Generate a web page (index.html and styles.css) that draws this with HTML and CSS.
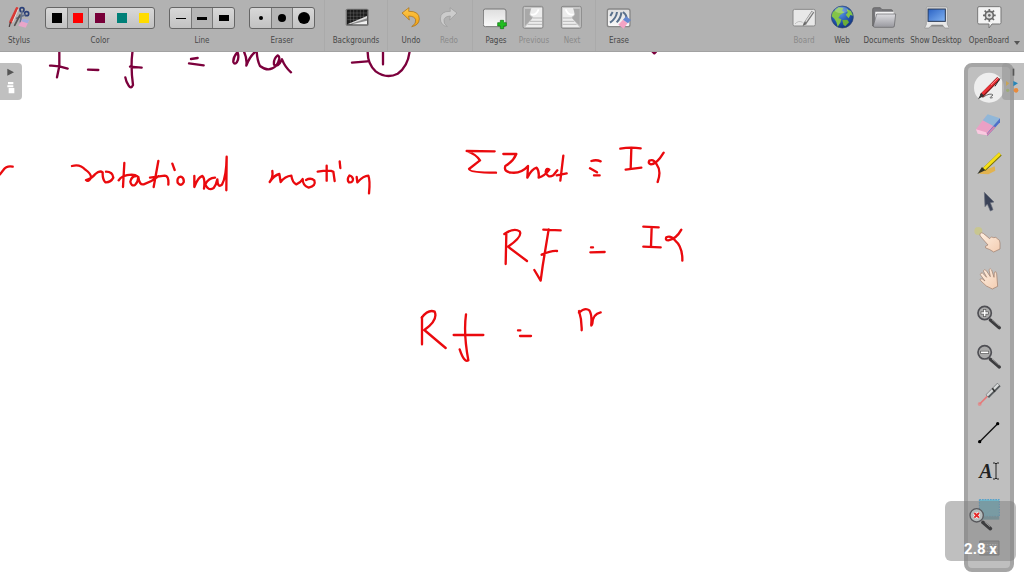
FILE: index.html
```html
<!DOCTYPE html>
<html lang="en">
<head>
<meta charset="utf-8">
<title>OpenBoard</title>
<link rel="stylesheet" href="styles.css">
</head>
<body>
<svg class="defs" aria-hidden="true">
  <defs>
    <linearGradient id="paper" x1="0" y1="0" x2="0" y2="1"><stop offset="0" stop-color="#dedede"/><stop offset="1" stop-color="#fafafa"/></linearGradient>
    <linearGradient id="screen" x1="0" y1="0" x2="1" y2="1"><stop offset="0" stop-color="#2a62c4"/><stop offset="1" stop-color="#83b4f2"/></linearGradient>
    <linearGradient id="folder" x1="0" y1="0" x2="0" y2="1"><stop offset="0" stop-color="#dcdce0"/><stop offset="1" stop-color="#98989e"/></linearGradient>
    <linearGradient id="gold" x1="0" y1="0" x2="0" y2="1"><stop offset="0" stop-color="#ffc84a"/><stop offset="1" stop-color="#f0a010"/></linearGradient>
    <radialGradient id="globe" cx=".4" cy=".3" r=".8"><stop offset="0" stop-color="#5c9ae8"/><stop offset=".6" stop-color="#1f4fa8"/><stop offset="1" stop-color="#102c70"/></radialGradient>
    <linearGradient id="skin" x1="0" y1="0" x2="1" y2="1"><stop offset="0" stop-color="#fff0e2"/><stop offset="1" stop-color="#f3cdb2"/></linearGradient>
  </defs>
</svg>
<header class="toolbar">
  <button class="tool">
    <svg class="icon" viewBox="18 15 78 78"><g fill="none" stroke-linecap="round"><circle cx="66" cy="29" r="6" stroke="#2b4078" stroke-width="5"/><circle cx="80" cy="41" r="6" stroke="#2b4078" stroke-width="5"/><path d="M74 45L50 55M66 35L61 66" stroke="#65728c" stroke-width="5"/><path d="M51 26L32 66" stroke="#d83a35" stroke-width="9"/><path d="M55 27L38 66" stroke="#e6e0dd" stroke-width="3"/><path d="M31 68L28 79" stroke="#4d4040" stroke-width="4"/><path d="M60 45L44 76" stroke="#555" stroke-width="5"/></g><path d="M55 77L68 56L88 60L77 83Z" fill="#e9a5c9"/><path d="M68 56L88 60L83 70L64 64Z" fill="#9faddd"/></svg>
    <span>Stylus</span>
  </button>
  <div class="group colors">
    <div class="segments" role="group" aria-labelledby="color-label">
      <button class="segment" aria-label="Black"><i class="swatch black"></i></button><button class="segment on" aria-label="Red"><i class="swatch red"></i></button><button class="segment" aria-label="Purple"><i class="swatch purple"></i></button><button class="segment" aria-label="Teal"><i class="swatch teal"></i></button><button class="segment" aria-label="Yellow"><i class="swatch yellow"></i></button>
    </div>
    <span id="color-label">Color</span>
  </div>
  <div class="group">
    <div class="segments" role="group" aria-labelledby="line-label">
      <button class="segment" aria-label="Fine line"><i class="line fine"></i></button><button class="segment on" aria-label="Medium line"><i class="line medium"></i></button><button class="segment" aria-label="Strong line"><i class="line strong"></i></button>
    </div>
    <span id="line-label">Line</span>
  </div>
  <div class="group">
    <div class="segments" role="group" aria-labelledby="eraser-label">
      <button class="segment" aria-label="Small eraser"><i class="dot small"></i></button><button class="segment on" aria-label="Medium eraser"><i class="dot middle"></i></button><button class="segment" aria-label="Large eraser"><i class="dot large"></i></button>
    </div>
    <span id="eraser-label">Eraser</span>
  </div>
  <div class="section first">
    <button class="tool wide">
      <svg class="icon" viewBox="309 15 78 78"><rect x="317" y="26" width="69" height="52" rx="5" fill="#777"/><rect x="321" y="29" width="61" height="45" rx="2" fill="#1c1c1c"/><path d="M322 39H382M322 49H382M322 59H382M331 29V70M341 29V70M351 29V70M361 29V70M371 29V70" stroke="#8b8b8b" stroke-width="1"/><path d="M322 73L340 65L381 48V73Z" fill="#ddd"/><path d="M330 72L381 55V73Z" fill="#898989"/><path d="M336 73L381 62V73Z" fill="#f0f0f0"/></svg>
      <span>Backgrounds</span>
    </button>
  </div>
  <div class="section">
    <button class="tool">
      <svg class="icon" viewBox="474 15 78 78"><path d="M486 39L507 23L506 34Q538 33 538 57Q537 76 515 80Q530 70 527 59Q524 49 506 48L508 60Z" fill="url(#gold)" stroke="#a4690d" stroke-width="2" stroke-linejoin="round"/></svg>
      <span>Undo</span>
    </button>
    <button class="tool" disabled>
      <svg class="icon" viewBox="588 15 78 78"><path d="M651 39L630 23L631 34Q601 33 601 57Q602 76 622 80Q609 70 612 59Q615 49 631 48L629 60Z" fill="#ccc" stroke="#989898" stroke-width="2" stroke-linejoin="round"/></svg>
      <span>Redo</span>
    </button>
  </div>
  <div class="section pages">
    <button class="tool">
      <svg class="icon" viewBox="45 15 78 78"><rect x="46" y="27" width="68" height="53" rx="6" fill="url(#paper)" stroke="#777" stroke-width="3"/><path d="M97 61H107V68H115V78H107V86H97V78H89V68H97Z" fill="#1fbd1f" stroke="#107410" stroke-width="2"/></svg>
      <span>Pages</span>
    </button>
    <button class="tool" disabled>
      <svg class="icon" viewBox="159 15 78 78"><rect x="165" y="19" width="60" height="66" rx="5" fill="#c4c4c4" stroke="#888" stroke-width="3"/><path d="M190 24H222V81H172L196 52L186 42Z" fill="#ececec"/><path d="M171 27H188L184 44L193 54L171 77Z" fill="#a8a8a8"/><path d="M194 54H222M186 64H222M179 73H222" stroke="#b9b9b9" stroke-width="3"/><path d="M188 43Q204 48 212 28" fill="none" stroke="#fff" stroke-width="5"/></svg>
      <span>Previous</span>
    </button>
    <button class="tool" disabled>
      <svg class="icon" viewBox="273 15 78 78"><rect x="280" y="19" width="60" height="66" rx="5" fill="#c4c4c4" stroke="#888" stroke-width="3"/><path d="M315 24H284V81H334L310 52L320 42Z" fill="#ececec"/><path d="M335 27H317L321 44L312 54L335 77Z" fill="#a8a8a8"/><path d="M311 54H284M319 64H284M326 73H284" stroke="#b9b9b9" stroke-width="3"/><path d="M317 43Q301 48 293 28" fill="none" stroke="#fff" stroke-width="5"/></svg>
      <span>Next</span>
    </button>
  </div>
  <div class="section">
    <button class="tool">
      <svg class="icon" viewBox="414 15 78 78"><rect x="418" y="27" width="68" height="53" rx="6" fill="url(#paper)" stroke="#888" stroke-width="4"/><g fill="none" stroke="#59708c" stroke-width="6"><path d="M427 48L434 36M426 68Q445 55 447 36M446 67Q459 54 460 37M465 36Q475 43 476 54"/></g><path d="M451 74L465 59L479 69L467 86Z" fill="#f3a3c4"/><path d="M465 59L474 49L489 60L480 70Z" fill="#6588d0"/></svg>
      <span>Erase</span>
    </button>
  </div>
  <nav class="modes">
    <button class="tool" disabled>
      <svg class="icon" viewBox="33 15 78 78"><rect x="39" y="28" width="67" height="50" rx="5" fill="#e8e8e8" stroke="#888" stroke-width="3"/><path d="M45 72Q55 60 68 67" fill="none" stroke="#aaa" stroke-width="2"/><path d="M99 35L76 69" stroke="#777" stroke-width="9"/><path d="M98 35L77 65" stroke="#ddd" stroke-width="4"/><path d="M72 66L81 72L68 78Z" fill="#666"/></svg>
      <span>Board</span>
    </button>
    <button class="tool">
      <svg class="icon" viewBox="147 15 78 78"><circle cx="187" cy="51" r="33" fill="url(#globe)" stroke="#30476f" stroke-width="2"/><path d="M158 37L176 22L190 24L186 32L193 37L181 44L175 54L184 58L181 68L173 80L169 66L163 56L155 49Z" fill="#83c448"/><path d="M200 27L213 33L219 47L211 45L206 55L197 44L203 38Z" fill="#83c448"/><path d="M187 60L202 59L207 67L196 79L190 74Z" fill="#6dad37"/><ellipse cx="184" cy="30" rx="20" ry="10" fill="#fff" opacity=".22"/></svg>
      <span>Web</span>
    </button>
    <button class="tool documents">
      <svg class="icon" viewBox="276 15 78 78"><path d="M281 78V28Q281 23 286 23H304L309 29H337Q341 29 341 35V76Z" fill="#77777b" stroke="#555" stroke-width="2"/><path d="M289 35H344V76H287Z" fill="#f2f2f4"/><path d="M293 42H350L346 78Q346 82 341 82H288Q282 82 283 77Z" fill="url(#folder)" stroke="#606064" stroke-width="2"/></svg>
      <span>Documents</span>
    </button>
    <button class="tool desktop">
      <svg class="icon" viewBox="429 15 78 78"><path d="M439 24Q439 21 443 21H498Q502 21 502 24V73L508 84H494L491 79H451L447 84H434L439 73Z" fill="#e8e8e8" stroke="#909090" stroke-width="2"/><rect x="444" y="27" width="52" height="37" fill="url(#screen)" stroke="#26354f" stroke-width="3"/><path d="M452 79L455 74H488L491 79Z" fill="#888"/></svg>
      <span>Show Desktop</span>
    </button>
    <button class="tool openboard">
      <svg class="icon" viewBox="588 15 78 78"><path d="M597 20H659Q663 20 663 24V68Q663 72 659 72H636L627 84V72H597Q593 72 593 68V24Q593 20 597 20Z" fill="#f3f3f3" stroke="#777" stroke-width="3"/><circle cx="628" cy="46" r="12" fill="#dcdcdc" stroke="#686868" stroke-width="5"/><path d="M628 27V33M628 59V65M609 46H615M641 46H647M614 32L619 37M637 55L642 60M614 60L619 55M637 37L642 32" stroke="#686868" stroke-width="5"/><circle cx="628" cy="46" r="4" fill="#686868"/></svg>
      <span>OpenBoard</span>
    </button>
    <button class="more" aria-label="More"></button>
  </nav>
</header>
<main class="board">
  <svg class="ink" viewBox="0 156 3072 1572" preserveAspectRatio="xMinYMin meet" role="img" aria-label="Handwritten equations of motion">
    <g class="plum">
      <path d="M178 140V198L171 232M150 197Q175 196 203 206M264 209L295 210M400 140Q390 190 399 255Q393 268 386 257Q378 245 376 232M390 200L425 203M573 177L593 174M567 190L611 196"/>
      <path d="M711 158Q699 172 700 186Q704 196 711 186Q718 174 713 158M732 155Q742 176 739 197Q750 166 770 152Q771 180 780 198Q806 218 828 198Q845 171 833 166Q820 176 822 194Q834 204 846 178Q855 201 873 217"/>
      <path d="M1056 188L1102 184M1104 140Q1098 188 1127 214Q1160 238 1193 221Q1228 197 1230 140M1149 140V193M1957 154L1963 160L1968 155"/>
    </g>
    <g class="crimson">
      <g transform="translate(0 390)">
        <path d="M0 133L10 120Q20 106 38 110M216 108Q240 101 256 119Q275 133 273 144Q265 157 258 150Q276 145 286 132Q299 120 308 127Q307 147 316 157Q332 158 340 143Q338 125 318 125M373 99L369 171M356 151Q365 135 395 134Q407 134 411 138Q394 137 391 155Q394 170 405 165Q414 157 415 141Q418 166 431 163Q455 155 475 139M475 93L461 171M450 143L494 137Q507 137 505 164M517 101L524 120M542 140Q530 142 533 158Q544 171 551 157Q553 143 542 140M583 138V171Q594 141 607 138Q616 145 612 176M645 143Q625 144 616 163Q624 184 641 174Q649 164 652 148Q653 175 666 164Q679 140 680 80L679 181"/>
        <path d="M817 123Q820 141 809 156Q822 136 838 132L842 156Q855 139 874 137Q877 158 889 163Q902 158 908 147Q908 167 926 173Q949 168 943 151Q932 142 918 150M980 107V152M953 125Q990 119 1000 125L1004 153M1019 94L1021 114M1048 137Q1039 149 1047 157Q1059 159 1059 146Q1055 137 1048 137M1070 141L1072 157Q1091 137 1105 137Q1111 152 1107 190"/>
      </g>
      <g transform="translate(1320 390)">
        <path d="M164 64L80 63Q107 72 120 91L87 117Q88 128 168 128M190 72H229Q220 94 196 108Q190 126 215 128Q244 131 264 108L262 143Q275 117 290 113Q298 122 296 143Q314 138 328 119Q319 112 317 126Q323 146 340 136L352 121M370 77L361 152M350 136L380 130M454 93Q469 88 482 94M450 115L471 127M462 136H479M541 56Q571 50 602 55M574 56L572 116M557 119L604 113M671 68Q650 103 633 103Q623 101 628 92Q641 86 650 103Q665 123 653 156"/>
        <path d="M199 312L197 402M193 312Q222 292 239 304Q249 319 204 350L261 393M326 298L308 408L302 452L283 420M310 299L362 301M305 374Q335 361 351 363M453 352H459M451 367L494 366M610 290L656 292M635 292L633 348M610 350L662 352M724 299Q709 327 685 331Q675 331 679 322Q692 315 705 331Q728 350 727 392"/>
      </g>
      <g transform="translate(1200 870)">
        <path d="M66 81V163M65 83Q85 57 104 65Q115 90 73 120L137 174M198 73Q190 130 205 211Q193 220 179 178M161 135H250M354 121H361M360 138H393M537 63Q546 90 545 121M537 68Q555 51 568 61Q576 73 574 101Q573 113 577 101Q578 72 602 67"/>
      </g>
    </g>
  </svg>
  <button class="tab tab-left" aria-label="Show pages">
    <svg viewBox="0 189 66 111"><path d="M22 206L42 217L22 227Z" fill="#555"/><path d="M24 246H40V253H24ZM22 256H40V262H22ZM26 264H43V280H26Z" fill="#fff"/></svg>
  </button>
  <aside class="palette" aria-label="Tools">
    <button class="pick" aria-label="Pen"><svg viewBox="96 30 102 102"><circle cx="147" cy="83" r="45" fill="#eee"/><path d="M128 112Q151 97 159 105Q142 117 158 113" fill="none" stroke="#666" stroke-width="3"/><path d="M176 55L124 108" stroke="#7c1515" stroke-width="12"/><path d="M175 55L124 105" stroke="#ed3036" stroke-width="8"/><path d="M174 54L153 75" stroke="#fbb" stroke-width="2"/><path d="M124 98L132 107L114 118Z" fill="#333"/><path d="M180 55L165 79" stroke="#333" stroke-width="3"/></svg></button>
    <button class="pick" aria-label="Eraser"><svg viewBox="96 147 102 102"><path d="M108 211L135 175L168 190L142 229L115 224Z" fill="#eba0c5"/><path d="M128 184L143 166L180 178L161 202Z" fill="#91b7d8"/><path d="M180 178V190L142 231L140 224L165 195Z" fill="#4d70c9"/><path d="M161 202L166 205L142 231L140 226Z" fill="#d684ae"/><path d="M108 211L138 220L142 229L113 224Z" fill="#f9cae0"/></svg></button>
    <button class="pick" aria-label="Highlighter"><svg viewBox="96 264 102 102"><path d="M119 340L164 322L166 335L145 346L118 344Z" fill="#e2b34f"/><path d="M181 285L132 332" stroke="#77700a" stroke-width="12"/><path d="M180 284L132 330" stroke="#f5df16" stroke-width="9"/><path d="M126 324L136 334L112 345Z" fill="#353525"/></svg></button>
    <button class="pick" aria-label="Selector"><svg viewBox="96 18 102 102"><path d="M133 40L162 69L151 71L159 92L151 96L142 75L135 83Z" fill="#3b4358" stroke="#666c7a" stroke-width="2"/></svg></button>
    <button class="pick" aria-label="Interact"><svg viewBox="96 132 102 102"><circle cx="115" cy="153" r="12" fill="#cfcb72" opacity=".6"/><path d="M121 160Q125 156 131 161L149 176Q153 167 161 173Q168 169 173 177Q180 179 180 189V207L161 216Q149 207 137 204Q133 197 144 195L123 171Q117 165 121 160Z" fill="url(#skin)" stroke="#9b7866" stroke-width="2"/></svg></button>
    <button class="pick" aria-label="Move page"><svg viewBox="96 246 102 102"><path d="M123 280Q127 275 131 283L140 292L130 273Q132 265 139 272L151 290L147 269Q150 262 155 270L162 292L163 277Q168 271 170 281L173 319L157 327Q138 321 122 302Q117 295 127 297L135 303L121 284Z" fill="url(#skin)" stroke="#9b7866" stroke-width="2"/></svg></button>
    <button class="pick" aria-label="Zoom in"><svg viewBox="96 0 102 102"><path d="M151 60L178 83" stroke="#3d3d3f" stroke-width="10" stroke-linecap="round"/><path d="M156 59L178 78" stroke="#999" stroke-width="3"/><circle cx="134" cy="39" r="20" fill="#aaa" stroke="#4f4f54" stroke-width="5"/><path d="M134 27V51M122 39H146" stroke="#555" stroke-width="9"/><path d="M134 29V49M124 39H144" stroke="#fff" stroke-width="5"/></svg></button>
    <button class="pick" aria-label="Zoom out"><svg viewBox="96 114 102 102"><path d="M151 175L178 198" stroke="#3d3d3f" stroke-width="10" stroke-linecap="round"/><path d="M156 174L178 193" stroke="#999" stroke-width="3"/><circle cx="134" cy="154" r="20" fill="#aaa" stroke="#4f4f54" stroke-width="5"/><path d="M121 154H147" stroke="#555" stroke-width="9"/><path d="M123 154H145" stroke="#fff" stroke-width="5"/></svg></button>
    <button class="pick" aria-label="Laser pointer"><svg viewBox="96 228 102 102"><path d="M144 284L119 309" stroke="#ef6a6a" stroke-width="5" opacity=".8"/><circle cx="119" cy="309" r="6" fill="#ee7777" opacity=".6"/><path d="M177 251L142 286" stroke="#55595c" stroke-width="14"/><path d="M175 250L141 284" stroke="#d7d9d9" stroke-width="7"/><path d="M157 262L165 272" stroke="#333" stroke-width="5"/></svg></button>
    <button class="pick" aria-label="Draw line"><svg viewBox="96 15 102 102"><path d="M119 92L173 38" stroke="#111" stroke-width="4"/><circle cx="119" cy="92" r="5"/><circle cx="173" cy="38" r="5"/></svg></button>
    <button class="pick text-tool" aria-label="Write text"><b>A</b><svg class="caret" viewBox="0 0 6 18"><path d="M0 1H2L3 2L4 1H6M3 2V16M0 17H2L3 16L4 17H6" fill="none" stroke="#222"/></svg></button>
    <button class="pick" aria-label="Capture"><svg viewBox="96 246 102 102"><rect x="118" y="269" width="60" height="50" fill="#72b7c6" stroke="#4c9ccc" stroke-width="3" stroke-dasharray="5 3"/><path d="M120 319H178V329H120Z" fill="#709da6"/></svg></button>
    <button class="pick" aria-label="Keyboard"><svg viewBox="96 360 102 102"><path d="M119 390H177V432H119Z" fill="#999" stroke="#777" stroke-width="3"/><path d="M124 401H173M124 411H173M124 421H173" stroke="#ddd" stroke-width="3" stroke-dasharray="5 3"/></svg></button>
  </aside>
  <button class="tab tab-right" aria-label="Show library">
    <svg viewBox="0 0 66 111"><path d="M32 17H37V38H32Z" fill="#555"/><path d="M34 54L48 61L34 70Z" fill="#2685b8"/><path d="M12 54L22 61L12 69Z" fill="#c8a357"/><circle cx="42" cy="82" r="7" fill="#e98a3b"/><circle cx="17" cy="82" r="5" fill="#9dab75"/></svg>
  </button>
  <output class="zoom">
    <svg viewBox="0 0 78 72"><path d="M45 46L67 65" stroke="#3d3d3f" stroke-width="11" stroke-linecap="round"/><path d="M50 45L66 59" stroke="#999" stroke-width="3"/><circle cx="26" cy="25" r="20" fill="#b5bcbc" stroke="#58585c" stroke-width="4"/><path d="M19 18L33 32M33 18L19 32" stroke="#fff" stroke-width="10"/><path d="M19 18L33 32M33 18L19 32" stroke="#e52a2a" stroke-width="6"/></svg>
    <span>2.8 x</span>
  </output>
</main>
</body>
</html>
```
FILE: styles.css
```css
* { box-sizing: border-box; }
body {
  margin: 0;
  height: 100vh;
  display: flex;
  flex-direction: column;
  background: #fff;
  color: #484848;
  font: 8px/12px "DejaVu Sans Condensed", "DejaVu Sans", sans-serif;
  overflow: hidden;
}
button {
  margin: 0;
  padding: 0;
  border: 0;
  background: none;
  color: inherit;
  font: inherit;
}
.defs { position: absolute; width: 0; height: 0; }
.toolbar {
  flex: none;
  display: flex;
  height: 52px;
  background: #b2b2b2;
  border-bottom: 1px solid #a2a2a2;
  white-space: nowrap;
}
.tool {
  display: flex;
  flex-direction: column;
  align-items: center;
  gap: 4px;
  width: 38px;
  padding-top: 5px;
}
.tool:disabled { color: #8a8a8a; }
.icon { width: 26px; height: 26px; flex: none; }
.group {
  display: flex;
  flex-direction: column;
  align-items: center;
  gap: 6px;
  margin-left: 14px;
  padding-top: 7px;
}
.colors { margin-left: 7px; }
.segments {
  display: flex;
  height: 22px;
  border: 1px solid #666;
  border-radius: 3px;
  background: linear-gradient(#d8d8d8, #c2c2c2);
  overflow: hidden;
}
.segment {
  display: flex;
  align-items: center;
  justify-content: center;
  width: 22px;
}
.segment:first-child, .segment:last-child { width: 21px; }
.segment.on {
  border: solid #777;
  border-width: 0 1px;
  background: #b5b5b5;
}
.swatch { width: 10px; height: 10px; }
.black { background: #000; }
.red { background: #f00; }
.purple { background: #780039; }
.teal { background: #008078; }
.yellow { background: #ffdc00; }
.line { width: 10px; background: #000; }
.fine { height: 1px; }
.medium { height: 3px; }
.strong { height: 6px; }
.dot { border-radius: 50%; background: #000; }
.small { width: 4px; height: 4px; }
.middle { width: 8px; height: 8px; }
.large { width: 12px; height: 12px; }
.section {
  display: flex;
  padding: 0 4px;
  border-left: 1px solid #aaa;
}
.section.first { margin-left: 9px; padding: 0 1px; }
.wide { width: 60px; }
.modes { display: flex; margin-left: auto; }
.documents { width: 46px; }
.desktop { width: 58px; }
.openboard { width: 48px; }
.more {
  display: flex;
  align-items: flex-end;
  width: 11px;
  padding: 0 0 6px 1px;
}
.more::after {
  content: "";
  border: solid transparent;
  border-width: 4px 3px 0;
  border-top-color: #555;
}
.board { flex: 1; position: relative; overflow: hidden; }
.ink { position: absolute; left: 0; top: 0; width: 100%; }
.ink path {
  fill: none;
  stroke-width: 7;
  stroke-linecap: round;
  stroke-linejoin: round;
}
.plum path { stroke: #7c003c; }
.crimson path { stroke: #ea0a0e; }
.tab {
  position: absolute;
  top: 11px;
  width: 22px;
  height: 37px;
  background: rgba(150, 150, 150, .6);
}
.tab svg { display: block; width: 22px; height: 37px; }
.tab-left { left: 0; border-radius: 0 4px 4px 0; }
.tab-right { right: 0; border-radius: 4px 0 0 4px; }
.palette {
  position: absolute;
  top: 11px;
  right: 10px;
  bottom: 4px;
  display: flex;
  flex-direction: column;
  justify-content: space-between;
  align-items: center;
  width: 50px;
  padding: 3px 0;
  border: 4px solid #a5a5a5;
  border-radius: 8px;
  background: #bfbfbf;
}
.pick { display: flex; align-items: center; justify-content: center; width: 34px; height: 34px; }
.pick svg { width: 34px; height: 34px; }
.text-tool b { font: italic bold 20px/34px "Liberation Serif", serif; color: #222; }
.text-tool .caret { width: 6px; height: 18px; }
.zoom {
  position: absolute;
  right: 8px;
  bottom: 15px;
  display: flex;
  flex-direction: column;
  align-items: center;
  width: 71px;
  height: 60px;
  padding-top: 6px;
  border-radius: 6px;
  background: rgba(128, 128, 128, .5);
  color: #fff;
  font: bold 15px/20px Roboto, sans-serif;
}
.zoom svg { width: 26px; height: 24px; }
.zoom span { padding-top: 8px; }
```
